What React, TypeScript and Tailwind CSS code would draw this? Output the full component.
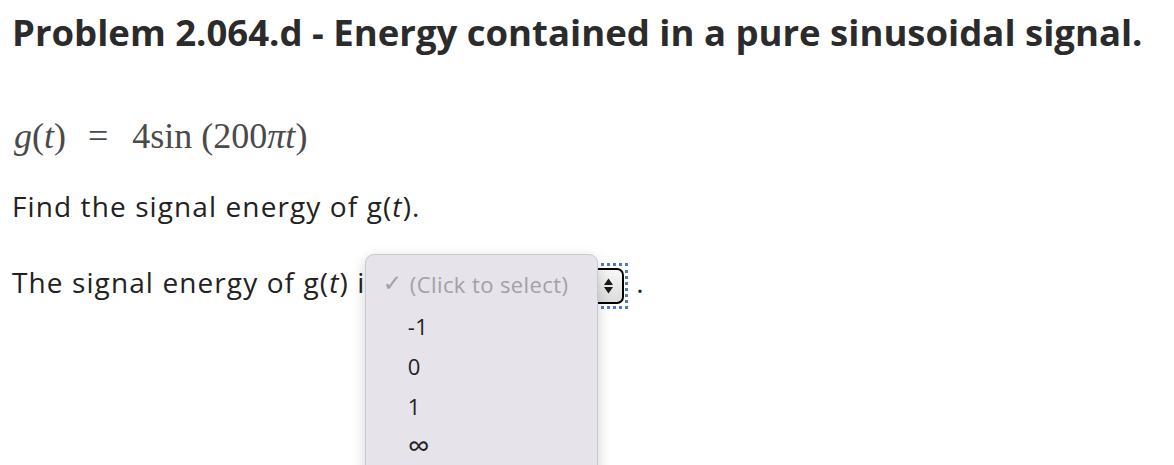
import React from "react";

const OPTIONS = ["-1", "0", "1", "∞"];

function StepperArrows() {
  return (
    <svg width="11" height="20" viewBox="0 0 11 20" className="block">
      <path d="M5.5 2.5 L10 9 L1 9 Z" fill="#1a1a1a" />
      <path d="M5.5 17.5 L10 11 L1 11 Z" fill="#1a1a1a" />
    </svg>
  );
}

function OpenSelect() {
  return (
    <span className="relative inline-block align-middle ml-[10px] w-[238px] h-[46px]">
      {/* focus ring + closed select */}
      <span className="absolute left-0 top-0 w-[238px] h-[46px] border-[3px] border-dotted border-[#4a7cc7]" />
      <span className="absolute left-[4px] top-[5px] w-[230px] h-[36px] rounded-[7px] border-2 border-black bg-gradient-to-b from-[#f7f7f7] to-[#dcdcdc] flex items-center justify-end pr-[8px]">
        <StepperArrows />
      </span>
      {/* open menu */}
      <div className="absolute left-[-25px] top-[-9px] w-[233px] h-[230px] rounded-t-[9px] bg-[#e6e3ea] border border-[#cbc9cf] shadow-[0_4px_14px_rgba(0,0,0,0.18)] pt-[9px] text-[22px] tracking-[0.4px] leading-none">
        <div className="flex items-center h-[40px] text-[#a2a1a7]">
          <span className="w-[44px] pl-[17px] text-[23px]" style={{ fontFamily: "'DejaVu Sans', sans-serif" }}>✓</span>
          <span>(Click to select)</span>
        </div>
        <div className="h-[2px]" />
        {OPTIONS.map((o) => (
          <div key={o} className="flex items-center h-[40px] pl-[42px] text-[#222]">
            {o === "∞" ? <span className="text-[31px] leading-none">∞</span> : o}
          </div>
        ))}
      </div>
    </span>
  );
}

export default function App() {
  return (
    <div className="w-[1174px] h-[465px] overflow-hidden bg-white pl-[12px] text-[#222]" style={{ fontFamily: "'Open Sans', Lato, sans-serif" }}>
      <h1 className="pt-[10px] text-[36.5px] font-bold leading-[44px] text-[#2b2b2b] whitespace-nowrap">
        Problem 2.064.d - Energy contained in a pure sinusoidal signal.
      </h1>
      <div className="mt-[60px] pl-[2px] text-[36px] leading-[44px] text-[#4a4a4a] whitespace-nowrap" style={{ fontFamily: "'Liberation Serif', 'Times New Roman', serif" }}>
        <i>g</i>(<i>t</i>)<span className="inline-block w-[22px]" />=<span className="inline-block w-[24px]" />4sin (200<i>πt</i>)
      </div>
      <p className="mt-[32px] text-[28px] tracking-[1.1px] leading-[32px] whitespace-nowrap">
        Find the signal energy of g(<i>t</i>).
      </p>
      <p className="mt-[37px] text-[28px] tracking-[1.1px] leading-[46px] whitespace-nowrap">
        The signal energy of g(<i>t</i>) is<OpenSelect /> .
      </p>
    </div>
  );
}
